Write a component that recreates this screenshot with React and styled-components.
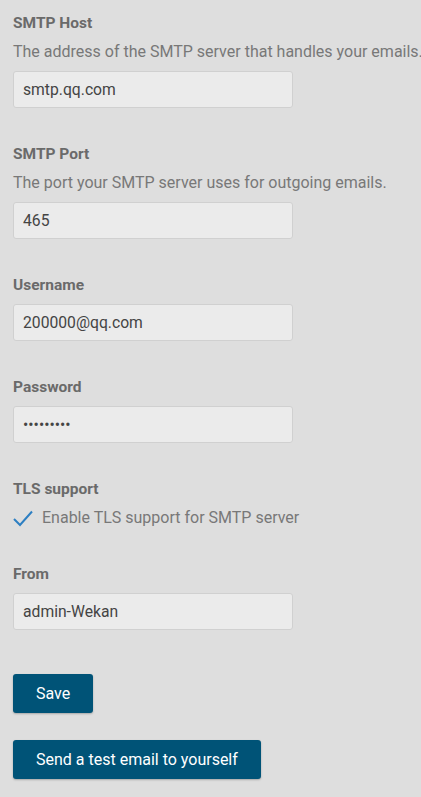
import React from "react";
import styled, { createGlobalStyle } from "styled-components";

const GlobalStyle = createGlobalStyle`
  html, body {
    margin: 0;
    padding: 0;
    background: #dedede;
  }
  body {
    font-family: Roboto, "Liberation Sans", sans-serif;
  }
`;

const Page = styled.div`
  padding: 13px 13px 20px 13px;
  min-height: 797px;
  box-sizing: border-box;
  background: #dedede;
`;

const Field = styled.div`
  margin-bottom: ${(p) => p.gap ?? 36}px;
`;

const Label = styled.div`
  font-size: 15.5px;
  line-height: 20px;
  font-weight: 700;
  color: #6a6a6a;
  margin-bottom: 9px;
`;

const Hint = styled.div`
  font-size: 16px;
  line-height: 20px;
  color: #787878;
  margin-bottom: 9px;
  white-space: nowrap;
`;

const Input = styled.input`
  display: block;
  box-sizing: border-box;
  width: 280px;
  height: 37px;
  padding: 0 9px;
  background: #ebebeb;
  border: 1px solid #d0d0d0;
  border-radius: 3px;
  font-family: inherit;
  font-size: 15.7px;
  color: #444;
  outline: none;
`;

const CheckRow = styled.label`
  display: flex;
  align-items: center;
  gap: 9px;
  font-size: 16px;
  line-height: 20px;
  color: #787878;
`;

const Actions = styled.div`
  display: flex;
  flex-direction: column;
  align-items: flex-start;
  gap: 27px;
  margin-top: 44px;
`;

const Button = styled.button`
  box-sizing: border-box;
  height: 39px;
  padding: 0 23px;
  background: #005377;
  color: #fff;
  border: none;
  border-radius: 3px;
  box-shadow: 0 1px 2px rgba(0, 0, 0, 0.25);
  font-family: inherit;
  font-size: 16px;
  font-weight: 400;
  cursor: pointer;
`;

const Check = () => (
  <svg width="20" height="17" viewBox="0 0 20 17">
    <path d="M1 9 L7 15 L19 1.5" fill="none" stroke="#2d7fc2" strokeWidth="2" />
  </svg>
);

export default function App() {
  return (
    <>
      <GlobalStyle />
      <Page>
        <Field>
          <Label>SMTP Host</Label>
          <Hint>The address of the SMTP server that handles your emails.</Hint>
          <Input defaultValue="smtp.qq.com" />
        </Field>
        <Field>
          <Label>SMTP Port</Label>
          <Hint>The port your SMTP server uses for outgoing emails.</Hint>
          <Input defaultValue="465" />
        </Field>
        <Field>
          <Label>Username</Label>
          <Input defaultValue="200000@qq.com" />
        </Field>
        <Field>
          <Label>Password</Label>
          <Input type="password" defaultValue="123456789" />
        </Field>
        <Field>
          <Label>TLS support</Label>
          <CheckRow>
            <Check />
            Enable TLS support for SMTP server
          </CheckRow>
        </Field>
        <Field gap={0}>
          <Label>From</Label>
          <Input defaultValue="admin-Wekan" />
        </Field>
        <Actions>
          <Button>Save</Button>
          <Button>Send a test email to yourself</Button>
        </Actions>
      </Page>
    </>
  );
}
